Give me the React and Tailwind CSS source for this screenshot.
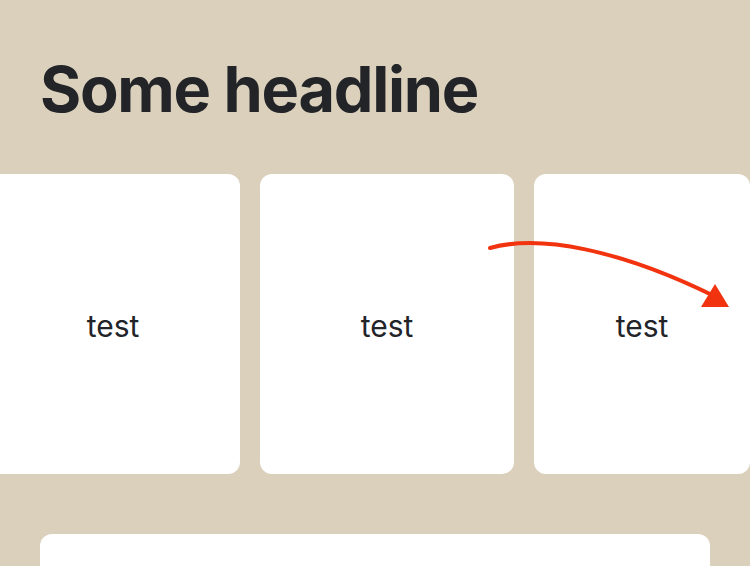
import React from 'react';

const cards = [
  { label: 'test', w: 'w-[254px]' },
  { label: 'test', w: 'w-[254px]' },
  { label: 'test', w: 'w-[216px]' },
];

export default function App() {
  return (
    <div className="relative w-[750px] h-[566px] overflow-hidden bg-[#dbd0bc] font-['Inter',sans-serif] text-[#222428]">
      <h1 className="pl-[40px] pt-[58px] text-[63px] leading-none font-bold tracking-[-0.02em]">
        Some headline
      </h1>

      {/* carousel, scrolled a bit to the left */}
      <div className="mt-[53px] -ml-[14px] flex gap-[20px]">
        {cards.map((c, i) => (
          <div
            key={i}
            className={`${c.w} h-[300px] shrink-0 rounded-[12px] bg-white flex items-center justify-center pt-[4px]`}
          >
            <span className="text-[30px] text-[#222428]">{c.label}</span>
          </div>
        ))}
      </div>

      <div className="mt-[60px] mx-[40px] h-[200px] rounded-[12px] bg-white" />

      {/* hint arrow */}
      <svg
        className="absolute left-0 top-0 pointer-events-none"
        width="750"
        height="566"
        viewBox="0 0 750 566"
      >
        <path
          d="M490 248 C 540 234, 620 250, 712 295"
          fill="none"
          stroke="#f2330f"
          strokeWidth="4"
          strokeLinecap="round"
        />
        <polygon points="729,307 701,307 715,284" fill="#f2330f" />
      </svg>
    </div>
  );
}
